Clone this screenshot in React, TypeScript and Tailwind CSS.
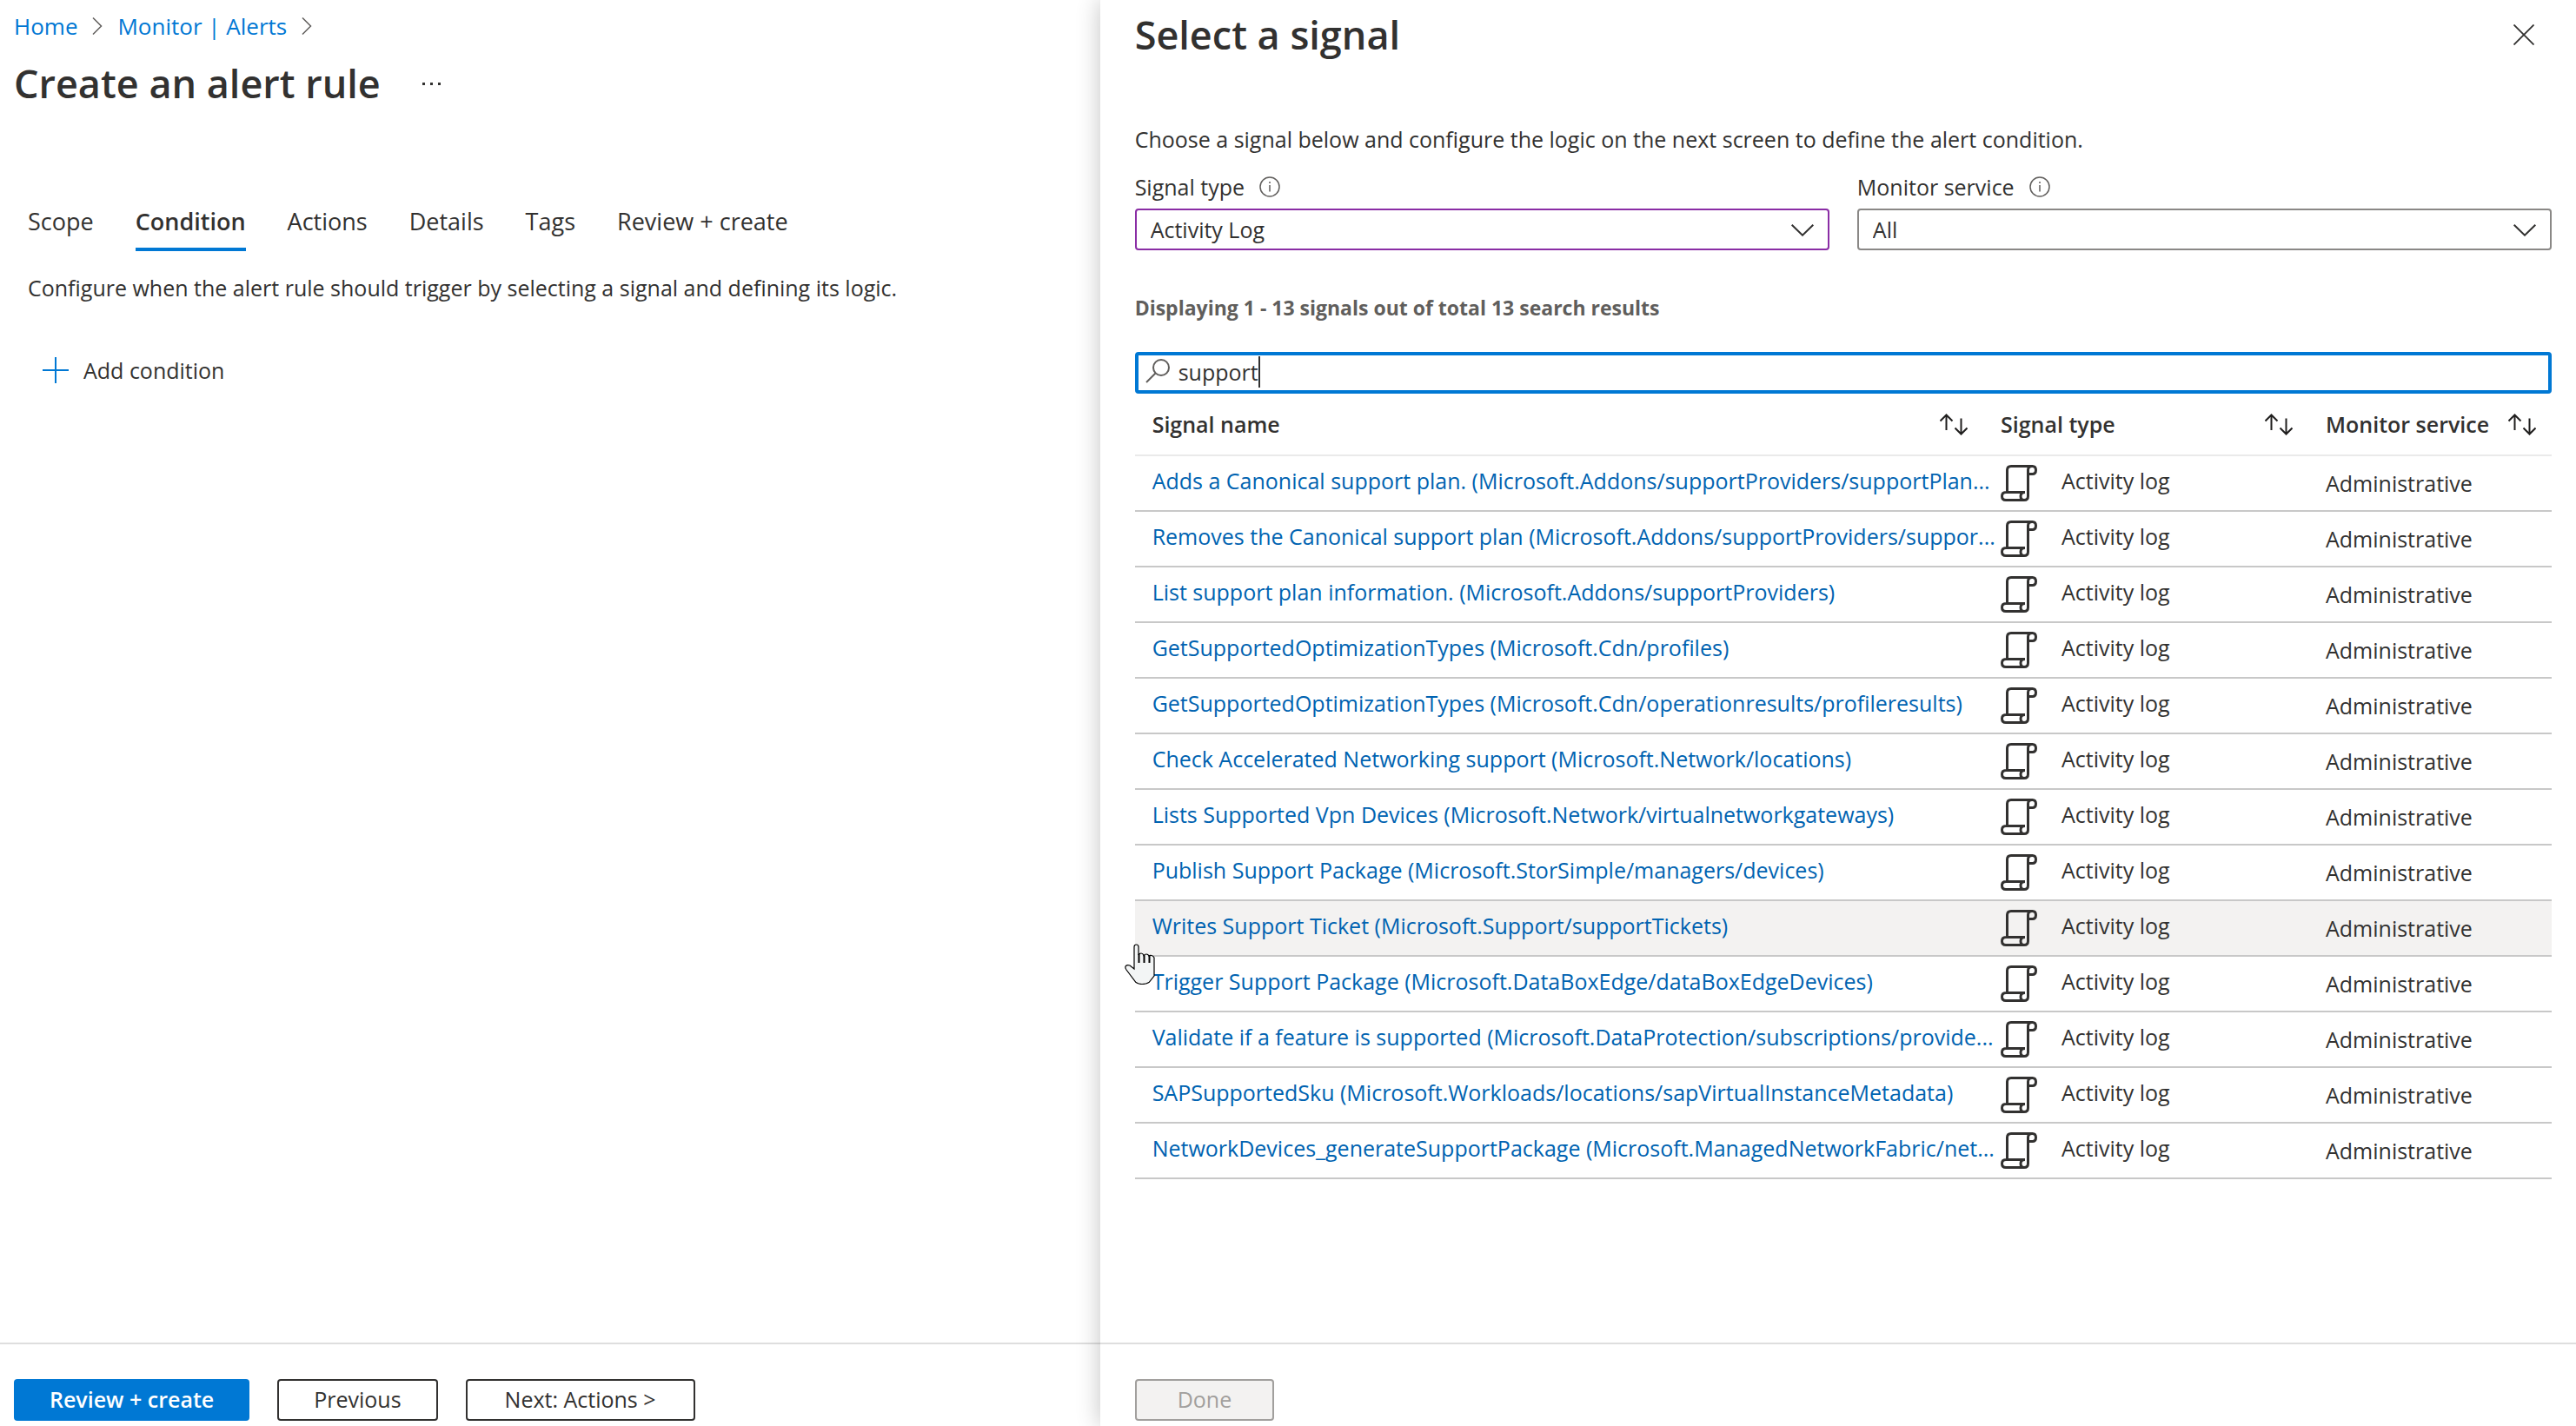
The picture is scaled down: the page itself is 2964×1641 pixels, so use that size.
import type { ReactNode } from 'react';

const signals = [
  'Adds a Canonical support plan. (Microsoft.Addons/supportProviders/supportPlan...',
  'Removes the Canonical support plan (Microsoft.Addons/supportProviders/suppor...',
  'List support plan information. (Microsoft.Addons/supportProviders)',
  'GetSupportedOptimizationTypes (Microsoft.Cdn/profiles)',
  'GetSupportedOptimizationTypes (Microsoft.Cdn/operationresults/profileresults)',
  'Check Accelerated Networking support (Microsoft.Network/locations)',
  'Lists Supported Vpn Devices (Microsoft.Network/virtualnetworkgateways)',
  'Publish Support Package (Microsoft.StorSimple/managers/devices)',
  'Writes Support Ticket (Microsoft.Support/supportTickets)',
  'Trigger Support Package (Microsoft.DataBoxEdge/dataBoxEdgeDevices)',
  'Validate if a feature is supported (Microsoft.DataProtection/subscriptions/provide...',
  'SAPSupportedSku (Microsoft.Workloads/locations/sapVirtualInstanceMetadata)',
  'NetworkDevices_generateSupportPackage (Microsoft.ManagedNetworkFabric/net...',
];

const tabs = ['Scope', 'Condition', 'Actions', 'Details', 'Tags', 'Review + create'];

function Crumb() {
  return (
    <svg className="mx-[17px] h-5 w-3" viewBox="0 0 12 20" fill="none" stroke="#605e5c" strokeWidth="1.5">
      <path d="M1 0.5 10.5 10 1 19.5" />
    </svg>
  );
}

function InfoIcon() {
  return (
    <svg className="h-6 w-6" viewBox="0 0 24 24" fill="none" stroke="#605e5c" strokeWidth="1.5">
      <circle cx="12" cy="12" r="11" />
      <path d="M12 10v7.500M12 6v2" />
    </svg>
  );
}

function SortIcon() {
  return (
    <svg className="h-[25px] w-8 shrink-0" viewBox="0 0 32 25" fill="none" stroke="#201f1e" strokeWidth="2">
      <path d="M7.500 19V1.500M0.500 8.500 7.500 1.500 14.500 8.500M24.500 5.500V23.500M17.500 16.500 24.500 23.500 31.500 16.500" />
    </svg>
  );
}

function ScrollIcon() {
  return (
    <svg className="h-[42px] w-[42px] shrink-0" viewBox="0 0 42 42" fill="none" stroke="#323130" strokeWidth="3">
      <path d="M7.500 31V6q0-4.500 4.500-4.500h24.500q4 0 4 4.500t-4 4.500h-4.500M36 1.500q-4.500 0-4.500 4.500v30q0 4.500-4.500 4.500H6q-4.500 0-4.500-4.500T6 31.500h22q-5 0-5 4.500t4 4.500" />
    </svg>
  );
}

function HandCursor() {
  return (
    <svg className="pointer-events-none absolute -left-3 top-[49px] z-10 h-[47px] w-[35px]" viewBox="0 0 35 47" fill="#f3f5f5" stroke="#000" strokeWidth="1.2">
      <path d="M11 29V4q0-3 2.500-3T16 4v9q1-2 3-2t3 2.500q1-1.500 3-1.500t3 2q1-1 3-.5t3 2.500v21l-6 7.500q-3 2-8 2-4 0-7-2L2 30q-2-3-.5-4.500T6 25z" />
      <path d="M16.500 12v10M22.500 13v9M28.500 14v8" strokeWidth="2" />
    </svg>
  );
}

function SelectField({ id, label, value, border }: { id: string; label: string; value: string; border: string }) {
  return (
    <div className="flex-1">
      <div className="flex h-9 items-center gap-[17px]">
        <label htmlFor={id}>{label}</label>
        <InfoIcon />
      </div>
      <div className="relative mt-[7px]">
        <select id={id} defaultValue={value} className={`block h-12 w-full appearance-none rounded-sm border-2 bg-white px-4 ${border}`}>
          <option>{value}</option>
        </select>
        <svg className="pointer-events-none absolute right-[18px] top-[18px] h-[14px] w-[26px]" viewBox="0 0 26 14" fill="none" stroke="#323130" strokeWidth="2">
          <path d="M0.700 0.700 13 12.700 25.300 0.700" />
        </svg>
      </div>
    </div>
  );
}

function HeaderCell({ children, className }: { children: ReactNode; className: string }) {
  return (
    <th className={`p-0 text-left font-semibold ${className}`}>
      <div className="flex items-center justify-between">
        <span className="whitespace-nowrap">{children}</span>
        <SortIcon />
      </div>
    </th>
  );
}

export default function App() {
  return (
    <div className="flex h-screen overflow-hidden bg-white font-['Open_Sans','Noto_Sans',sans-serif] text-[25px] leading-9 text-[#323130]">
      <main className="flex min-w-0 flex-1 flex-col">
        <nav className="flex h-[60px] items-center px-4 text-[26px] text-[#0078d4]">
          <a href="#home">Home</a>
          <Crumb />
          <a href="#alerts">Monitor | Alerts</a>
          <Crumb />
        </nav>
        <div className="flex items-center gap-12 px-4">
          <h1 className="text-[45px] font-semibold leading-[72px]">Create an alert rule</h1>
          <button aria-label="More" className="flex gap-[6px]">
            <span className="h-[3px] w-[3px] bg-[#323130]" />
            <span className="h-[3px] w-[3px] bg-[#323130]" />
            <span className="h-[3px] w-[3px] bg-[#323130]" />
          </button>
        </div>
        <div role="tablist" className="mt-[93px] flex gap-12 px-8 text-[27px]">
          {tabs.map((tab) => (
            <button
              key={tab}
              role="tab"
              aria-selected={tab === 'Condition'}
              className={`h-16 border-b-4 ${tab === 'Condition' ? 'border-[#0078d4] font-semibold' : 'border-transparent'}`}
            >
              {tab}
            </button>
          ))}
        </div>
        <p className="mt-6 px-8">Configure when the alert rule should trigger by selecting a signal and defining its logic.</p>
        <button className="mt-[59px] flex items-center gap-4 self-start px-12">
          <svg className="h-8 w-8" viewBox="0 0 32 32" fill="none" stroke="#0078d4" strokeWidth="2">
            <path d="M16 1v30M1 16h30" />
          </svg>
          Add condition
        </button>
        <footer className="mt-auto flex h-[96px] items-start gap-8 border-t-2 border-[#dedede] px-4 pt-10">
          <button className="h-12 rounded-sm bg-[#0078d4] px-[41px] pb-[2px] font-semibold text-white">Review + create</button>
          <button className="h-12 rounded-sm border-2 border-[#323130] px-10 pb-[2px]">Previous</button>
          <button className="h-12 rounded-sm border-2 border-[#323130] px-[43px] pb-[2px]">Next: Actions &gt;</button>
        </footer>
      </main>

      <aside className="flex w-[57.3%] flex-col bg-white shadow-[0_0_26px_rgba(0,0,0,0.24)]">
        <div className="flex items-center justify-between pl-10 pr-12">
          <h2 className="text-[45px] font-semibold leading-[80px]">Select a signal</h2>
          <button aria-label="Close">
            <svg className="h-6 w-6" viewBox="0 0 24 24" stroke="#323130" strokeWidth="1.8">
              <path d="M0.500 0.500 23.500 23.500M23.500 0.500 0.500 23.500" />
            </svg>
          </button>
        </div>
        <div className="pl-10 pr-7">
          <p className="mt-[62px]">Choose a signal below and configure the logic on the next screen to define the alert condition.</p>
          <div className="mt-[19px] flex gap-8">
            <SelectField id="signal-type" label="Signal type" value="Activity Log" border="border-[#8a2da5]" />
            <SelectField id="monitor-service" label="Monitor service" value="All" border="border-[#8a8886]" />
          </div>
          <p className="mt-12 text-[23px] font-bold text-[#605e5c]">Displaying 1 - 13 signals out of total 13 search results</p>
          <div className="mt-[33px] flex h-12 items-center rounded-sm border-4 border-[#0078d4] pl-2">
            <svg className="mb-1 h-7 w-7 shrink-0" viewBox="0 0 28 28" fill="none" stroke="#605e5c" strokeWidth="2">
              <circle cx="18" cy="10" r="9" />
              <path d="M11.500 16.500 1 27" />
            </svg>
            <input aria-label="Search signals" defaultValue="support" className="mb-[2px] ml-[10px] field-sizing-content outline-none" />
            <span className="mb-[2px] h-9 w-[2px] bg-[#323130]" />
          </div>
          <table className="w-full table-fixed border-collapse">
            <thead>
              <tr className="h-[71px] border-b-2 border-[#eaeaea]">
                <HeaderCell className="pl-5 pr-[30px]">Signal name</HeaderCell>
                <HeaderCell className="w-[374px] pl-2 pr-[30px]">Signal type</HeaderCell>
                <HeaderCell className="w-[268px] pl-2 pr-[18px]">Monitor service</HeaderCell>
              </tr>
            </thead>
            <tbody>
              {signals.map((name, i) => (
                <tr key={name} className={`h-16 border-b-2 border-[#c8c8c8] ${i === 8 ? 'bg-[#f3f2f1]' : ''}`}>
                  <td className="relative p-0 pb-[6px] pl-5">
                    <a href="#signal" className="block whitespace-nowrap text-[#0063b1]">{name}</a>
                    {i === 8 && <HandCursor />}
                  </td>
                  <td className="p-0 pl-2">
                    <div className="flex items-center gap-7">
                      <ScrollIcon />
                      <span className="pb-[6px]">Activity log</span>
                    </div>
                  </td>
                  <td className="p-0 pl-2">Administrative</td>
                </tr>
              ))}
            </tbody>
          </table>
        </div>
        <footer className="mt-auto h-[96px] border-t-2 border-[#dedede] pl-10 pt-10">
          <button disabled className="h-12 rounded-sm border-2 border-[#a19f9d] bg-[#f3f2f1] px-[47px] pb-[2px] text-[#a19f9d]">Done</button>
        </footer>
      </aside>
    </div>
  );
}
